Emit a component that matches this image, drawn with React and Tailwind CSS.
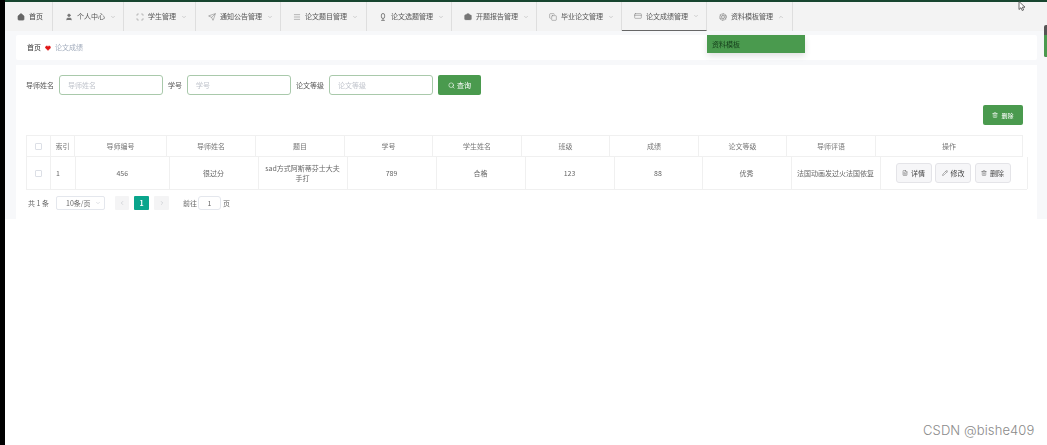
import React from 'react'
import {
  House, User, Scan, Send, Menu, Briefcase, Copy, CreditCard, Aperture, ChevronDown, ChevronUp,
  ChevronLeft, ChevronRight, Heart, Search, Trash2, FileText, Pencil,
} from 'lucide-react'

function MicIcon({ className }) {
  return (
    <svg className={className} viewBox="0 0 8 8" fill="none" stroke="currentColor" strokeWidth="0.9">
      <rect x="2.4" y="0.5" width="3.2" height="5" rx="1.6" />
      <path d="M4 5.6v1.4M2.2 7.4h3.6" />
    </svg>
  )
}

const tabs = [
  { label: '个人中心', icon: User, width: 'w-[71px]', solid: true },
  { label: '学生管理', icon: Scan, width: 'w-[72px]' },
  { label: '通知公告管理', icon: Send, width: 'w-[85px]' },
  { label: '论文题目管理', icon: Menu, width: 'w-[86px]' },
  { label: '论文选题管理', icon: MicIcon, width: 'w-[85px]' },
  { label: '开题报告管理', icon: Briefcase, width: 'w-[85px]', solid: true },
  { label: '毕业论文管理', icon: Copy, width: 'w-[85px]' },
  { label: '论文成绩管理', icon: CreditCard, width: 'w-[85px]', active: true },
  { label: '资料模板管理', icon: Aperture, width: 'w-[86px]', open: true },
]

const headers = ['索引', '导师编号', '导师姓名', '题目', '学号', '学生姓名', '班级', '成绩', '论文等级', '导师评语', '操作']
const row = ['456', '很过分', 'sad方式阿斯蒂芬士大夫\n手打', '789', '合格', '123', '88', '优秀', '法国动画发过火法国依复']

function Checkbox() {
  return <span className="block h-[7px] w-[7px] rounded-[1px] border border-[#dcdfe6] bg-white" />
}

function RowButton({ icon: Icon, label }) {
  return (
    <button className="flex h-[20px] w-[36px] items-center justify-center gap-[3px] rounded-[3px] border border-[#e4e4e8] bg-[#f6f6f8] text-[7px] text-[#444]">
      <Icon className="h-[6px] w-[6px]" strokeWidth={1.5} />
      {label}
    </button>
  )
}

function Field({ label, placeholder, labelWidth }) {
  return (
    <div className="flex items-center gap-[5px]">
      <span className={`text-[#555] ${labelWidth}`}>{label}</span>
      <div className="flex h-[20px] w-[104px] items-center rounded-[3px] border border-[#a9c9ab] bg-white pl-[8px] text-[#c0c4cc]">
        {placeholder}
      </div>
    </div>
  )
}

export default function App() {
  return (
    <div className="relative flex h-[445px] w-[1047px] overflow-hidden bg-white font-['Noto_Sans_CJK_SC','Noto_Sans',sans-serif] text-[7px]">
      <aside className="w-[5px] shrink-0 bg-black" />

      <div className="flex min-w-0 flex-1 flex-col blur-[0.45px]">
        <nav className="flex h-[31px] shrink-0 border-t-2 border-[#17452f] bg-[#f3f3f3] text-[#555]">
          <div className="flex w-[48px] items-center gap-[4px] border-r border-[#dedede] pl-[12px] text-[#444]">
            <House className="h-[8px] w-[8px] fill-[#666] text-[#666]" />
            首页
          </div>
          {tabs.map((tab) => (
            <div
              key={tab.label}
              className={`flex items-center border-r pl-[12px] ${tab.width} ${tab.active ? 'border-b border-r-[#dedede] border-b-[#666]' : 'border-[#dedede]'}`}
            >
              <tab.icon className={`h-[8px] w-[8px] shrink-0 text-[#777] ${tab.solid ? 'fill-[#777]' : ''}`} strokeWidth={1.5} />
              <span className="ml-[4px] whitespace-nowrap">{tab.label}</span>
              {tab.open ? (
                <ChevronUp className="ml-[5px] h-[6px] w-[6px] shrink-0 text-[#aaa]" />
              ) : (
                <ChevronDown className="ml-[5px] h-[6px] w-[6px] shrink-0 text-[#aaa]" />
              )}
            </div>
          ))}
        </nav>

        <main className="flex h-[188px] shrink-0 flex-col gap-[5px] bg-[#f7f8fa] pt-[4px] pr-[10px] pl-[11px]">
          <div className="flex h-[25px] items-center rounded-[2px] bg-white pl-[11px]">
            <span className="text-[#333]">首页</span>
            <Heart className="mx-[4px] h-[6px] w-[6px] fill-[#e01515] text-[#e01515]" />
            <span className="text-[#a3adbd]">论文成绩</span>
          </div>

          <section className="flex-1 bg-white pt-[10px] pr-[14px] pl-[10px]">
            <div className="flex h-[20px] items-center">
              <Field label="导师姓名" placeholder="导师姓名" labelWidth="w-[28px]" />
              <Field label="学号" placeholder="学号" labelWidth="w-[14px] ml-[5px]" />
              <Field label="论文等级" placeholder="论文等级" labelWidth="w-[28px] ml-[5px]" />
              <button className="ml-[5px] flex h-[20px] w-[43px] items-center justify-center gap-[2px] rounded-[2px] bg-[#4a9a4e] text-white">
                <Search className="h-[7px] w-[7px]" />
                查询
              </button>
            </div>

            <div className="mt-[10px] flex justify-end">
              <button className="flex h-[20px] w-[40px] items-center justify-center gap-[3px] rounded-[2px] bg-[#4a9a4e] text-[6px] text-white">
                <Trash2 className="h-[6px] w-[6px]" />
                删除
              </button>
            </div>

            <div className="mt-[10px] w-[1001px]">
              <div className="grid h-[22px] w-[997px] grid-cols-[25px_24px_92px_89px_89px_88px_89px_88px_89px_88px_89px_147px] border-t border-[#f0f0f0] text-[#777]">
                <div className="flex items-center justify-center border-x border-b border-[#f0f0f0]">
                  <Checkbox />
                </div>
                {headers.map((header) => (
                  <div key={header} className="flex items-center justify-center border-r border-b border-[#f0f0f0]">
                    {header}
                  </div>
                ))}
              </div>

              <div className="grid h-[33px] grid-cols-[25px_25px_93.5px_89px_89px_89px_89px_89px_88px_89px_89px_147px] border-b border-[#f0f0f0] text-[#666]">
                <div className="flex items-center justify-center border-x border-[#f0f0f0]">
                  <Checkbox />
                </div>
                <div className="flex items-center border-r border-[#f0f0f0] pl-[5px]">1</div>
                {row.map((value) => (
                  <div key={value} className="flex items-center justify-center border-r border-[#f0f0f0] text-center leading-[10px] whitespace-pre-line">
                    {value}
                  </div>
                ))}
                <div className="flex items-center justify-center gap-[3.5px] border-r border-[#f0f0f0] pr-[1px]">
                  <RowButton icon={FileText} label="详情" />
                  <RowButton icon={Pencil} label="修改" />
                  <RowButton icon={Trash2} label="删除" />
                </div>
              </div>

              <div className="mt-[6px] flex h-[14px] items-center text-[#666]">
                <span className="ml-[2px] w-[21px] whitespace-nowrap">共 1 条</span>
                <div className="ml-[7px] flex h-[14px] w-[49px] items-center justify-between rounded-[2px] border border-[#e4e7ed] pr-[3px] pl-[9px]">
                  10条/页
                  <ChevronDown className="h-[6px] w-[6px] text-[#c0c4cc]" />
                </div>
                <div className="ml-[10px] flex h-[14px] w-[14px] items-center justify-center rounded-[1px] bg-[#f4f4f5] text-[#b5b8bf]">
                  <ChevronLeft className="h-[6px] w-[6px]" />
                </div>
                <div className="ml-[5px] flex h-[14px] w-[15px] items-center justify-center rounded-[1px] bg-[#0aa58c] font-bold text-white">1</div>
                <div className="ml-[5px] flex h-[14px] w-[15px] items-center justify-center rounded-[1px] bg-[#f4f4f5] text-[#b5b8bf]">
                  <ChevronRight className="h-[6px] w-[6px]" />
                </div>
                <span className="ml-[14px]">前往</span>
                <div className="mx-[1px] flex h-[14px] w-[23px] items-center justify-center rounded-[3px] border border-[#e4e7ed]">1</div>
                <span className="ml-[1px]">页</span>
              </div>
            </div>
          </section>
        </main>
      </div>

      {/* open submenu under the last tab */}
      <div className="absolute top-[35px] left-[707px] flex h-[18px] w-[98px] items-center bg-[#4a9a4e] pl-[5px] text-[#143d1a] shadow-[0_3px_6px_rgba(0,0,0,0.12)] blur-[0.45px]">
        资料模板
      </div>

      {/* scrollbar remnant and cursor */}
      <div className="absolute top-[25px] left-[1044px] h-[32px] w-[3px] overflow-hidden rounded-l-[2px] bg-[#555]">
        <div className="mt-[10px] h-[22px] bg-[#4a9a4e]" />
      </div>
      <svg className="absolute top-[1px] left-[1018px] h-[10px] w-[8px]" viewBox="0 0 8 10">
        <path d="M1 0.5v8l2-1.8 1.2 2.8 1.4-.6-1.2-2.7h2.6z" fill="#fff" stroke="#444" strokeWidth="0.8" />
      </svg>

      <span className="absolute top-[421px] left-[923px] font-['Inter',sans-serif] text-[13px] leading-[18px] font-light tracking-[0.1px] text-[#8a8a8a]">
        CSDN @bishe409
      </span>
    </div>
  )
}
